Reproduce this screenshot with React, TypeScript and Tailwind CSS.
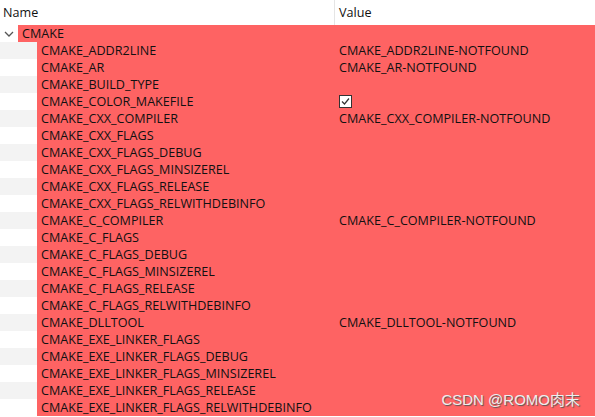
import React from "react";

const children: [string, string | boolean][] = [
  ["CMAKE_ADDR2LINE", "CMAKE_ADDR2LINE-NOTFOUND"],
  ["CMAKE_AR", "CMAKE_AR-NOTFOUND"],
  ["CMAKE_BUILD_TYPE", ""],
  ["CMAKE_COLOR_MAKEFILE", true],
  ["CMAKE_CXX_COMPILER", "CMAKE_CXX_COMPILER-NOTFOUND"],
  ["CMAKE_CXX_FLAGS", ""],
  ["CMAKE_CXX_FLAGS_DEBUG", ""],
  ["CMAKE_CXX_FLAGS_MINSIZEREL", ""],
  ["CMAKE_CXX_FLAGS_RELEASE", ""],
  ["CMAKE_CXX_FLAGS_RELWITHDEBINFO", ""],
  ["CMAKE_C_COMPILER", "CMAKE_C_COMPILER-NOTFOUND"],
  ["CMAKE_C_FLAGS", ""],
  ["CMAKE_C_FLAGS_DEBUG", ""],
  ["CMAKE_C_FLAGS_MINSIZEREL", ""],
  ["CMAKE_C_FLAGS_RELEASE", ""],
  ["CMAKE_C_FLAGS_RELWITHDEBINFO", ""],
  ["CMAKE_DLLTOOL", "CMAKE_DLLTOOL-NOTFOUND"],
  ["CMAKE_EXE_LINKER_FLAGS", ""],
  ["CMAKE_EXE_LINKER_FLAGS_DEBUG", ""],
  ["CMAKE_EXE_LINKER_FLAGS_MINSIZEREL", ""],
  ["CMAKE_EXE_LINKER_FLAGS_RELEASE", ""],
  ["CMAKE_EXE_LINKER_FLAGS_RELWITHDEBINFO", ""],
];

function Check() {
  return (
    <span className="flex h-[13px] w-[13px] items-center justify-center border border-[#333] bg-white">
      <svg width="11" height="11" viewBox="0 0 11 11" fill="none">
        <path d="M2 5.5 L4.5 8 L9 2.5" stroke="#333" strokeWidth="1.2" />
      </svg>
    </span>
  );
}

export default function App() {
  return (
    <div
      className="relative h-[417px] w-[595px] overflow-hidden bg-white text-[12.6px] leading-[17px] text-[#111]"
      style={{ fontFamily: '"Open Sans", "Noto Sans CJK SC", sans-serif' }}
    >
      {/* header */}
      <div className="flex h-[25px] items-center">
        <div className="w-[334px] pl-[3px]">Name</div>
        <div className="h-full w-px bg-[#e5e5e5]" />
        <div className="pl-[4px]">Value</div>
      </div>

      {/* group row */}
      <div className="flex h-[17px]">
        <div className="flex w-[18px] items-center justify-center">
          <svg width="10" height="6" viewBox="0 0 10 6" fill="none">
            <path d="M1 1 L5 5 L9 1" stroke="#555" strokeWidth="1.3" />
          </svg>
        </div>
        <div className="flex-1 bg-[#fe6363] pl-[4px]">CMAKE</div>
      </div>

      {children.map(([name, value], i) => (
        <div key={name} className="flex h-[17px]">
          <div className={`w-[37px] ${i % 2 === 0 ? "bg-[#f3f3f3]" : "bg-white"}`} />
          <div className="flex flex-1 bg-[#fe6363]">
            <div className="w-[297px] whitespace-nowrap pl-[4px]">{name}</div>
            <div className="flex items-center whitespace-nowrap pl-[5px]">
              {value === true ? <Check /> : value}
            </div>
          </div>
        </div>
      ))}

      <div
        className="absolute bottom-[9px] right-[15px] text-[15px] text-[#eee]"
        style={{ fontFamily: '"Liberation Sans", "Noto Sans CJK SC", sans-serif', textShadow: "1px 1px 1px #555" }}
      >
        CSDN @ROMO肉末
      </div>
    </div>
  );
}
